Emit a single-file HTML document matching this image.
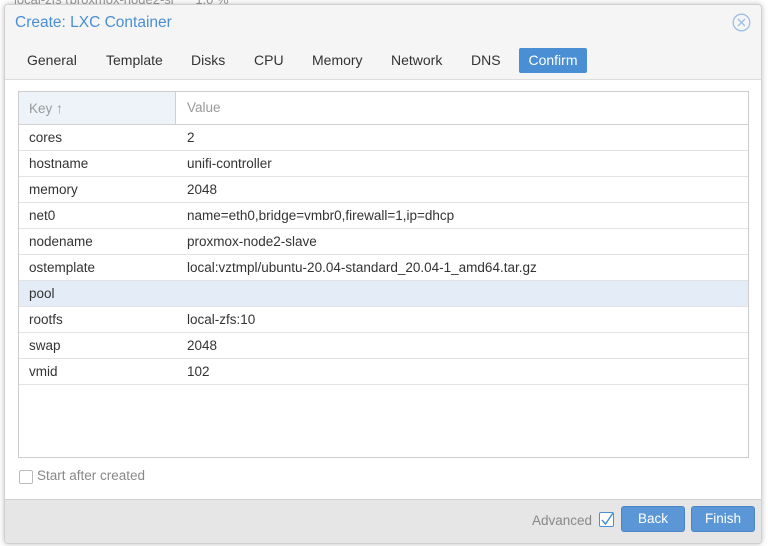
<!DOCTYPE html>
<html><head><style>
*{box-sizing:border-box;margin:0;padding:0}
body{width:768px;height:546px;background:#fff;font-family:"Liberation Sans",sans-serif;position:relative;overflow:hidden}
.bgtext{position:absolute;left:14px;top:-8px;color:#999;font-size:13px}
.dlg{position:absolute;left:4px;top:4px;width:758px;height:540px;background:#fff;border:1px solid #d0d0d0;border-radius:4px;box-shadow:0 0 6px rgba(0,0,0,.25);overflow:hidden}
.top{position:absolute;left:0;top:0;width:758px;height:75px;background:#f5f5f5;border-bottom:1px solid #ddd}
.title{position:absolute;left:10px;top:9px;font-size:15.5px;color:#4a8fd3}
.close{position:absolute;left:727px;top:8px}
.tab{position:absolute;top:47px;font-size:14px;color:#333}
.conf{position:absolute;left:514px;top:43px;width:68px;height:25px;background:#4a8fd3;color:#fff;border-radius:2px;font-size:14px;text-align:center;line-height:25px}
.hdr{height:33px;border-bottom:1px solid #d0d0d0;display:flex;font-size:13.5px;color:#999}
.hdr .k{width:157px;background:#eef3f9;border-right:1px solid #d0d0d0;padding:8px 0 0 10px}
.hdr .v{padding:8px 0 0 11px}
.row{height:26px;border-bottom:1px solid #e2e2e2;display:flex;font-size:13.5px;color:#333;line-height:25px}
.row .k{width:157px;padding-left:10px}
.row .v{padding-left:11px}
.sel{background:#e4edf7}
.cb{position:absolute;left:14px;width:14px;height:14px;border:1px solid #bbb;border-radius:2px}
.cbl{position:absolute;left:32px;font-size:13.5px;color:#888}
.foot{position:absolute;left:0;top:494px;width:758px;height:46px;background:#e6e6e6;border-top:1px solid #d0d0d0}
.adv{position:absolute;left:527px;top:13px;font-size:13.5px;color:#888}
.acb{position:absolute;left:594px;top:12px;width:15px;height:15px;border:1.3px solid #4a8fd3;border-radius:2px;background:#fff}
.btn{position:absolute;top:6px;height:26px;background:#5b97d6;border:1px solid #4a86c6;border-radius:3px;color:#fff;font-size:13.5px;text-align:center;line-height:24px}
</style></head><body>
<div class="bgtext">local-zfs (proxmox-node2-sl&nbsp;&nbsp;&nbsp;&nbsp;&nbsp;&nbsp;1.0 %</div>
<div class="dlg">
<div class="top"></div>
<div class="title">Create: LXC Container</div>
<svg class="close" width="19" height="19" viewBox="0 0 19 19"><circle cx="9.5" cy="9.5" r="8.3" fill="none" stroke="#9cbfe6" stroke-width="1.3"/><path d="M6 6 L13 13 M13 6 L6 13" stroke="#9cbfe6" stroke-width="1.3"/></svg>
<div class="tab" style="left:22px">General</div>
<div class="tab" style="left:101px">Template</div>
<div class="tab" style="left:186px">Disks</div>
<div class="tab" style="left:249px">CPU</div>
<div class="tab" style="left:307px">Memory</div>
<div class="tab" style="left:386px">Network</div>
<div class="tab" style="left:466px">DNS</div>
<div class="conf">Confirm</div>
<div style="position:absolute;left:13px;top:86px;width:731px;height:367px;border:1px solid #ccc;background:#fff">
<div class="hdr"><div class="k">Key <span style="font-size:14px">↑</span></div><div class="v">Value</div></div>
<div class="row"><div class="k">cores</div><div class="v">2</div></div>
<div class="row"><div class="k">hostname</div><div class="v">unifi-controller</div></div>
<div class="row"><div class="k">memory</div><div class="v">2048</div></div>
<div class="row"><div class="k">net0</div><div class="v">name=eth0,bridge=vmbr0,firewall=1,ip=dhcp</div></div>
<div class="row"><div class="k">nodename</div><div class="v">proxmox-node2-slave</div></div>
<div class="row"><div class="k">ostemplate</div><div class="v">local:vztmpl/ubuntu-20.04-standard_20.04-1_amd64.tar.gz</div></div>
<div class="row sel"><div class="k">pool</div><div class="v"></div></div>
<div class="row"><div class="k">rootfs</div><div class="v">local-zfs:10</div></div>
<div class="row"><div class="k">swap</div><div class="v">2048</div></div>
<div class="row"><div class="k">vmid</div><div class="v">102</div></div>
</div>
<div class="cb" style="top:465px"></div>
<div class="cbl" style="top:463px">Start after created</div>
<div class="foot">
<div class="adv">Advanced</div>
<div class="acb"><svg width="14" height="14" viewBox="0 0 14 14"><path d="M2 7 L5.5 11 L13 0" fill="none" stroke="#4a8fd3" stroke-width="1.5"/></svg></div>
<div class="btn" style="left:616px;width:64px">Back</div>
<div class="btn" style="left:686px;width:64px">Finish</div>
</div>
</div>
</body></html>
